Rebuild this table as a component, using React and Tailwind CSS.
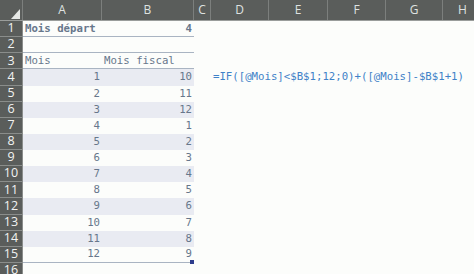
import React from "react";

const rows = [
  { n: 1, a: "Mois départ", b: "4", bold: true, border: true, aLeft: true },
  { n: 2, a: "", b: "", border: true },
  { n: 3, a: "Mois", b: "Mois fiscal", border: true, aLeft: true, bLeft: true },
  { n: 4, a: "1", b: "10", band: true, formula: true },
  { n: 5, a: "2", b: "11" },
  { n: 6, a: "3", b: "12", band: true },
  { n: 7, a: "4", b: "1" },
  { n: 8, a: "5", b: "2", band: true },
  { n: 9, a: "6", b: "3" },
  { n: 10, a: "7", b: "4", band: true },
  { n: 11, a: "8", b: "5" },
  { n: 12, a: "9", b: "6", band: true },
  { n: 13, a: "10", b: "7" },
  { n: 14, a: "11", b: "8", band: true },
  { n: 15, a: "12", b: "9", border: true, handle: true },
  { n: 16, a: "", b: "" },
];

const cols = [
  { l: "A", w: "w-[79px]" },
  { l: "B", w: "w-[92px]" },
  { l: "C", w: "w-[17px]" },
  { l: "D", w: "w-[58px]" },
  { l: "E", w: "w-[59px]" },
  { l: "F", w: "w-[58px]" },
  { l: "G", w: "w-[57px]" },
  { l: "H", w: "w-[40px]" },
];

const mono = "font-['DejaVu_Sans_Mono','Liberation_Mono',monospace]";

export default function App() {
  return (
    <div className="w-[474px] h-[274px] overflow-hidden bg-[#fcfdfb] font-['Open_Sans','Noto_Sans',sans-serif]">
      <div className="flex h-[21px] bg-[#5a5d5b] border-b border-[#9a9d9b]">
        <div className="relative w-[23px] shrink-0 border-r border-[#7c7f7d]">
          <svg className="absolute left-[11px] top-[9px]" width="9" height="10" viewBox="0 0 9 10">
            <polygon points="9,0 9,10 0,10" fill="#e6e8e6" />
          </svg>
        </div>
        {cols.map((c) => (
          <div
            key={c.l}
            className={`${c.w} shrink-0 flex items-center justify-center text-[12px] text-[#dfe2e0] border-r border-[#7c7f7d]`}
          >
            {c.l}
          </div>
        ))}
      </div>
      {rows.map((r) => (
        <div key={r.n} className="flex h-[16.14px]">
          <div className="w-[23px] shrink-0 bg-[#5a5d5b] border-r border-b border-[#8a8d8b] flex items-center justify-center text-[12.5px] leading-none text-[#f2f3f2]">
            {r.n}
          </div>
          <div
            className={`w-[79px] shrink-0 flex items-center px-[2px] ${mono} text-[10.7px] text-[#67778b] ${r.aLeft ? "justify-start" : "justify-end"} ${r.bold ? "font-bold" : ""} ${r.band ? "bg-[#e9ebf2]" : ""} ${r.border ? "border-b border-[#a9b4c2]" : ""}`}
          >
            {r.a}
          </div>
          <div
            className={`relative w-[92px] shrink-0 flex items-center px-[2px] ${mono} text-[10.7px] text-[#67778b] ${r.bLeft ? "justify-start" : "justify-end"} ${r.bold ? "font-bold" : ""} ${r.band ? "bg-[#e9ebf2]" : ""} ${r.border ? "border-b border-[#a9b4c2]" : ""}`}
          >
            {r.b}
            {r.handle && (
              <span className="absolute right-0 bottom-[-2px] w-[4px] h-[4px] bg-[#2d3c8c]" />
            )}
          </div>
          <div className="w-[17px] shrink-0" />
          <div className="relative flex-1 flex items-center">
            {r.formula && (
              <span className={`absolute left-[2px] whitespace-nowrap ${mono} text-[10.7px] text-[#3f82c8]`}>
                =IF([@Mois]&lt;$B$1;12;0)+([@Mois]-$B$1+1)
              </span>
            )}
          </div>
        </div>
      ))}
    </div>
  );
}
